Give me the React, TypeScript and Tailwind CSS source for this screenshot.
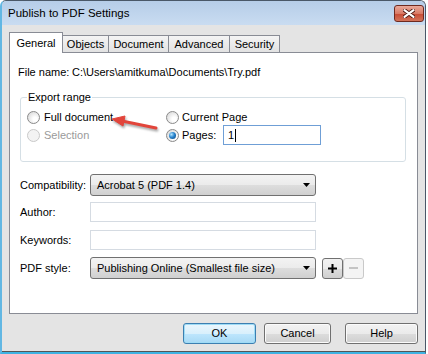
import clsx from "clsx";

const tabs = [
  { label: "General", width: "w-[54px]", active: true },
  { label: "Objects", width: "w-[47px]", active: false },
  { label: "Document", width: "w-[61px]", active: false },
  { label: "Advanced", width: "w-[62px]", active: false },
  { label: "Security", width: "w-[51px]", active: false },
];

function Radio({ checked = false, disabled = false }: { checked?: boolean; disabled?: boolean }) {
  return (
    <span
      className={clsx(
        "flex h-[13px] w-[13px] shrink-0 items-center justify-center rounded-full border",
        disabled
          ? "border-[#c9c9c9] bg-[#f3f3f3]"
          : "border-[#8a8a8a] bg-[radial-gradient(circle_at_65%_65%,#ffffff_20%,#d6d6d6_90%)]",
      )}
    >
      {checked ? (
        <span className="h-[7px] w-[7px] rounded-full bg-[radial-gradient(circle_at_35%_35%,#b5e6ff_0%,#2a86cf_45%,#0a3f78_100%)]" />
      ) : null}
    </span>
  );
}

function Select({ value }: { value: string }) {
  return (
    <div className="flex h-[22px] w-[226px] items-center justify-between rounded-[3px] border border-[#707070] bg-[linear-gradient(#f3f3f3_0%,#ebebeb_50%,#dddddd_51%,#d0d0d0_100%)] pl-[6px] pr-[5px]">
      <span>{value}</span>
      <svg width="7" height="4" viewBox="0 0 7 4">
        <path d="M0 0h7L3.5 4z" fill="#000" />
      </svg>
    </div>
  );
}

function Field({ label, children, className }: { label: string; children: React.ReactNode; className?: string }) {
  return (
    <div className={clsx("flex items-center", className)}>
      <span className="w-[70px]">{label}</span>
      {children}
    </div>
  );
}

function Button({ label, primary = false, className }: { label: string; primary?: boolean; className?: string }) {
  return (
    <div
      className={clsx(
        "flex h-[21px] items-center justify-center rounded-[3px] border",
        primary
          ? "border-[#3c7fb1] bg-[linear-gradient(#eaf6fd_0%,#d9f0fc_50%,#bee6fd_51%,#a7d9f5_100%)] shadow-[inset_0_0_0_1px_#9fdcf6]"
          : "border-[#707070] bg-[linear-gradient(#f2f2f2_0%,#ebebeb_50%,#dddddd_51%,#cfcfcf_100%)] shadow-[inset_0_0_0_1px_#fbfbfb]",
        className,
      )}
    >
      {label}
    </div>
  );
}

export default function App() {
  return (
    <div className="relative h-[354px] w-[428px] bg-white font-['Liberation_Sans',Arial,sans-serif] text-[11px] text-black">
      <div className="flex h-[354px] w-[426px] flex-col overflow-hidden rounded-t-[6px] border-t border-r border-[#4a5868] border-b-2 border-b-[#3eb3e3] border-l-2 border-l-[#62b7e3] bg-[#e4e4e4] shadow-[inset_0_-1px_0_#555]">
        {/* title bar */}
        <div className="flex h-[24px] shrink-0 justify-between bg-[linear-gradient(#b6cde8,#c9dcf1)] pl-[6px] pr-[1px]">
          <span className="mt-[5px] text-[11.5px] leading-[14px] text-black">Publish to PDF Settings</span>
          <div className="mt-[4px] flex h-[17px] w-[30px] items-center justify-center rounded-[3px] border border-[#6e2a20] bg-[linear-gradient(#e9a99b_0%,#d97b66_50%,#c74a33_51%,#d2735a_100%)]">
            <svg width="12" height="9" viewBox="0 0 12 9">
              <path d="M1.5 1.2 10.5 7.8M10.5 1.2 1.5 7.8" stroke="#4a1710" strokeWidth="4" strokeLinecap="round" />
              <path d="M1.5 1.2 10.5 7.8M10.5 1.2 1.5 7.8" stroke="#ffffff" strokeWidth="2.2" strokeLinecap="round" />
            </svg>
          </div>
        </div>

        <div className="flex-1 pl-[7px]">
          {/* tabs */}
          <div className="relative z-10 mt-[7px] flex h-[20px] items-end">
            {tabs.map((tab, index) => (
              <div
                key={tab.label}
                className={clsx(
                  "flex items-center justify-center border-x border-t border-[#898c95]",
                  tab.width,
                  index > 0 && "-ml-px",
                  tab.active
                    ? "-mb-px h-[21px] bg-white"
                    : "h-[17px] bg-[linear-gradient(#f4f4f4,#e2e2e2)]",
                )}
              >
                {tab.label}
              </div>
            ))}
          </div>

          {/* panel */}
          <div className="h-[262px] w-[409px] border border-[#898c95] bg-white">
            <div className="mt-[12px] flex h-[14px] pl-[8px] leading-[14px]">
              <span className="w-[54px]">File name:</span>
              <span>C:\Users\amitkuma\Documents\Try.pdf</span>
            </div>

            <fieldset className="mt-[11px] ml-[10px] w-[386px] rounded-[3px] border border-[#d5dfe5] px-[6px] pb-[17px]">
              <legend className="px-[1px] leading-[14px]">Export range</legend>
              <div className="pt-[4px]">
                <div className="flex h-[18px] items-center">
                  <div className="flex w-[139px] items-center gap-[4px]">
                    <Radio />
                    <span>Full document</span>
                  </div>
                  <div className="flex items-center gap-[3px]">
                    <Radio />
                    <span>Current Page</span>
                  </div>
                </div>
                <div className="flex h-[18px] items-center">
                  <div className="flex w-[139px] items-center gap-[4px] text-[#9a9a9a]">
                    <Radio disabled />
                    <span>Selection</span>
                  </div>
                  <div className="flex items-center gap-[3px]">
                    <Radio checked />
                    <span className="w-[38px]">Pages:</span>
                    <div className="flex h-[20px] w-[98px] items-center border border-[#6f9fd6] pl-[4px]">
                      <span>1</span>
                      <span className="ml-px h-[13px] w-px bg-black" />
                    </div>
                  </div>
                </div>
              </div>
            </fieldset>

            <div className="ml-[10px]">
              <Field label="Compatibility:" className="mt-[12px]">
                <Select value="Acrobat 5 (PDF 1.4)" />
              </Field>
              <Field label="Author:" className="mt-[6px]">
                <div className="h-[20px] w-[226px] border border-[#d5dbe2] bg-white" />
              </Field>
              <Field label="Keywords:" className="mt-[8px]">
                <div className="h-[20px] w-[226px] border border-[#d5dbe2] bg-white" />
              </Field>
              <Field label="PDF style:" className="mt-[7px]">
                <Select value="Publishing Online (Smallest file size)" />
                <div className="ml-[6px] flex h-[21px] w-[21px] items-center justify-center rounded-[3px] border border-[#707070] bg-[linear-gradient(#f2f2f2_0%,#ebebeb_50%,#dddddd_51%,#cfcfcf_100%)]">
                  <svg width="9" height="9" viewBox="0 0 9 9">
                    <path d="M3.5 0h2v3.5H9v2H5.5V9h-2V5.5H0v-2h3.5z" fill="#000" />
                  </svg>
                </div>
                <div className="flex h-[21px] w-[21px] items-center justify-center rounded-[3px] border border-[#c9c9c9] bg-[#f4f4f4]">
                  <span className="h-[2px] w-[9px] bg-[#c4c4c4]" />
                </div>
              </Field>
            </div>
          </div>

          {/* dialog buttons */}
          <div className="mt-[9px] flex w-[409px] justify-end">
            <Button label="OK" primary className="w-[73px]" />
            <Button label="Cancel" className="ml-[8px] w-[67px]" />
            <Button label="Help" className="ml-[14px] w-[73px]" />
          </div>
        </div>
      </div>

      {/* red annotation arrow */}
      <svg
        className="pointer-events-none absolute top-0 left-0 drop-shadow-[1px_2px_1px_rgba(0,0,0,0.35)]"
        width="428"
        height="354"
        viewBox="0 0 428 354"
      >
        <path d="M156 128 122 121" stroke="#e2453b" strokeWidth="3" strokeLinecap="round" />
        <path d="M112 119 125 116 123 126z" fill="#e2453b" stroke="#e2453b" strokeWidth="1" strokeLinejoin="round" />
      </svg>
    </div>
  );
}
